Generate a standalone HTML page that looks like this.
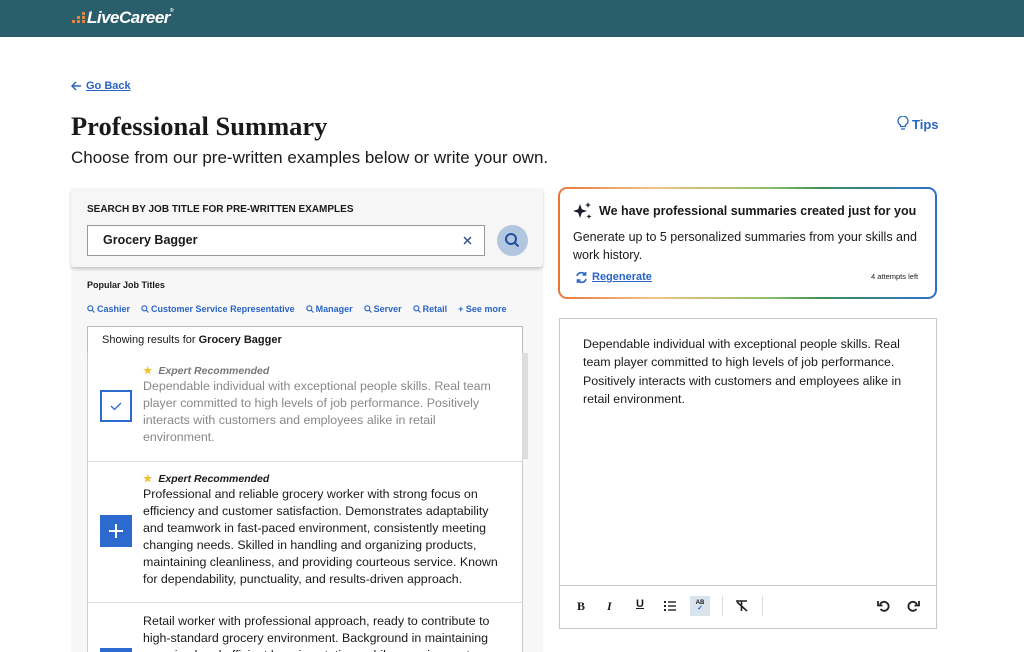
<!DOCTYPE html>
<html><head><meta charset="utf-8"><style>
*{box-sizing:border-box;margin:0;padding:0}
html,body{width:1024px;height:652px;overflow:hidden}
body{background:#fff;font-family:"Liberation Sans",Arial,sans-serif;color:#1a1a1a;position:relative}
.abs{position:absolute}
.hdr{left:0;top:0;width:1024px;height:37px;background:#2a5e6a}
.blue{color:#2a64c6}
.pill{display:inline-block;margin-right:11px}
.pill svg{vertical-align:-1px;margin-right:2px}
.item{position:absolute;left:0;width:434px;border-bottom:1px solid #ddd;background:#fff}
.txt{position:absolute;left:55px;font-size:12.4px;line-height:17px}
.er{font-size:10.5px;font-style:italic;font-weight:bold;line-height:14px}
.star{color:#f2c230;font-style:normal;margin-right:6px}
</style></head><body>
<div class="abs hdr"></div>
<div class="abs" style="left:72px;top:12px;width:14px;height:12px">
<div class="abs" style="left:10px;top:0;width:3px;height:3px;background:#e8833a"></div>
<div class="abs" style="left:5px;top:4px;width:3px;height:3px;background:#e8833a"></div>
<div class="abs" style="left:10px;top:4px;width:3px;height:3px;background:#e8833a"></div>
<div class="abs" style="left:0;top:8px;width:3px;height:3px;background:#e8833a"></div>
<div class="abs" style="left:5px;top:8px;width:3px;height:3px;background:#e8833a"></div>
<div class="abs" style="left:10px;top:8px;width:3px;height:3px;background:#e8833a"></div>
</div>
<div class="abs" style="left:87px;top:8px;color:#fff;font-weight:bold;font-style:italic;font-size:17px;letter-spacing:-0.5px">LiveCareer<span style="font-size:5px;vertical-align:top">®</span></div>

<svg class="abs" style="left:71px;top:81px" width="11" height="10" viewBox="0 0 11 10"><path d="M10 5H1.5M5 1L1 5l4 4" fill="none" stroke="#2a64c6" stroke-width="1.5"/></svg>
<div class="abs blue" style="left:86px;top:80px;font-size:11px;font-weight:bold;text-decoration:underline">Go Back</div>
<div class="abs" style="left:71px;top:111px;font-family:'Liberation Serif',serif;font-weight:bold;font-size:26.5px">Professional Summary</div>
<div class="abs" style="left:71px;top:148px;font-size:17px">Choose from our pre-written examples below or write your own.</div>
<div class="abs blue" style="left:897px;top:116px;font-size:13px;font-weight:bold">
<svg width="12" height="15" viewBox="0 0 12 15" style="vertical-align:-2px;margin-right:3px"><path d="M3.5 10.5V9C2 8 1 6.6 1 5a5 5 0 0110 0c0 1.6-1 3-2.5 4v1.5zM4 13h4" fill="none" stroke="#2a64c6" stroke-width="1.3"/></svg>Tips</div>

<div class="abs" style="left:71px;top:188px;width:472px;height:464px;background:#f7f7f7"></div>
<div class="abs" style="left:71px;top:188px;width:472px;height:79px;background:#f6f6f6;box-shadow:0 2px 3px rgba(0,0,0,.2);border-radius:3px"></div>
<div class="abs" style="left:87px;top:204px;font-size:10px;font-weight:bold">SEARCH BY JOB TITLE FOR PRE-WRITTEN EXAMPLES</div>
<div class="abs" style="left:87px;top:225px;width:398px;height:31px;background:#fff;border:1px solid #999"></div>
<div class="abs" style="left:103px;top:233px;font-size:12.5px;font-weight:bold">Grocery Bagger</div>
<svg class="abs" style="left:463px;top:236px" width="9" height="9"><path d="M1 1l7 7M8 1L1 8" stroke="#2a4f8c" stroke-width="1.4"/></svg>
<div class="abs" style="left:497px;top:225px;width:31px;height:31px;border-radius:50%;background:#b3c6e0"></div>
<svg class="abs" style="left:504px;top:232px" width="17" height="17" viewBox="0 0 17 17"><circle cx="7" cy="7" r="5" fill="none" stroke="#1f4f9e" stroke-width="2"/><path d="M10.5 10.5l4 4" stroke="#1f4f9e" stroke-width="2"/></svg>

<div class="abs" style="left:87px;top:280px;font-size:9px;font-weight:bold">Popular Job Titles</div>
<div class="abs blue" style="left:87px;top:304px;font-size:9px;font-weight:bold;white-space:nowrap">
<span class="pill"><svg width="8" height="8"><circle cx="3.3" cy="3.3" r="2.5" fill="none" stroke="#2a64c6" stroke-width="1.1"/><path d="M5 5l2.5 2.5" stroke="#2a64c6" stroke-width="1.1"/></svg>Cashier</span><span class="pill"><svg width="8" height="8"><circle cx="3.3" cy="3.3" r="2.5" fill="none" stroke="#2a64c6" stroke-width="1.1"/><path d="M5 5l2.5 2.5" stroke="#2a64c6" stroke-width="1.1"/></svg>Customer Service Representative</span><span class="pill"><svg width="8" height="8"><circle cx="3.3" cy="3.3" r="2.5" fill="none" stroke="#2a64c6" stroke-width="1.1"/><path d="M5 5l2.5 2.5" stroke="#2a64c6" stroke-width="1.1"/></svg>Manager</span><span class="pill"><svg width="8" height="8"><circle cx="3.3" cy="3.3" r="2.5" fill="none" stroke="#2a64c6" stroke-width="1.1"/><path d="M5 5l2.5 2.5" stroke="#2a64c6" stroke-width="1.1"/></svg>Server</span><span class="pill"><svg width="8" height="8"><circle cx="3.3" cy="3.3" r="2.5" fill="none" stroke="#2a64c6" stroke-width="1.1"/><path d="M5 5l2.5 2.5" stroke="#2a64c6" stroke-width="1.1"/></svg>Retail</span><span>+ See more</span></div>

<div class="abs" style="left:87px;top:326px;width:436px;height:28px;background:#fff;border:1px solid #bbb;font-size:11px;padding:7px 0 0 14px">Showing results for <b>Grocery Bagger</b></div>
<div class="abs" style="left:87px;top:353px;width:436px;height:299px;border-left:1px solid #ccc;border-right:1px solid #ccc;background:#fff;overflow:hidden">
<div class="item" style="top:1px;height:108px">
<div class="abs" style="left:12px;top:36px;width:32px;height:32px;border:2px solid #2d6ad0;background:#fff"></div>
<svg class="abs" style="left:21px;top:45px" width="14" height="14" viewBox="0 0 14 14"><path d="M2 7l3.5 3.5L12 4" fill="none" stroke="#2d6ad0" stroke-width="1.3"/></svg>
<div class="txt" style="top:10px;color:#888"><div class="er" style="color:#777"><span class="star">★</span>Expert Recommended</div>Dependable individual with exceptional people skills. Real team<br>player committed to high levels of job performance. Positively<br>interacts with customers and employees alike in retail<br>environment.</div>
</div>
<div class="item" style="top:109px;height:141px">
<div class="abs" style="left:12px;top:53px;width:32px;height:32px;background:#2d6ad0"></div>
<svg class="abs" style="left:20px;top:61px" width="16" height="16"><path d="M8 1v14M1 8h14" stroke="#fff" stroke-width="2"/></svg>
<div class="txt" style="top:10px"><div class="er"><span class="star">★</span>Expert Recommended</div>Professional and reliable grocery worker with strong focus on<br>efficiency and customer satisfaction. Demonstrates adaptability<br>and teamwork in fast-paced environment, consistently meeting<br>changing needs. Skilled in handling and organizing products,<br>maintaining cleanliness, and providing courteous service. Known<br>for dependability, punctuality, and results-driven approach.</div>
</div>
<div class="item" style="top:250px;height:60px;border-bottom:none">
<div class="abs" style="left:12px;top:45px;width:32px;height:32px;background:#2d6ad0"></div>
<div class="txt" style="top:10px">Retail worker with professional approach, ready to contribute to<br>high-standard grocery environment. Background in maintaining<br>organized and efficient bagging stations while ensuring customer</div>
</div>
</div>
<div class="abs" style="left:522px;top:353px;width:6px;height:106px;background:#ddd"></div>

<div class="abs" style="left:558px;top:187px;width:379px;height:112px;border-radius:9px;background:linear-gradient(90deg,#e8763a,#f2c48a 25%,#8fbf6a 55%,#3e8f5a 70%,#2f6fd0)"></div>
<div class="abs" style="left:560px;top:189px;width:375px;height:108px;border-radius:7px;background:#fff"></div>
<svg class="abs" style="left:572px;top:201px" width="22" height="20" viewBox="0 0 22 20"><path d="M8 3l1.8 5.2L15 10l-5.2 1.8L8 17l-1.8-5.2L1 10l5.2-1.8z" fill="#1a1a2e"/><path d="M16 1l.8 2.2L19 4l-2.2.8L16 7l-.8-2.2L13 4l2.2-.8zM17 13l.7 1.8 1.8.7-1.8.7L17 18l-.7-1.8-1.8-.7 1.8-.7z" fill="#1a1a2e"/></svg>
<div class="abs" style="left:599px;top:204px;font-size:12.5px;font-weight:bold">We have professional summaries created just for you</div>
<div class="abs" style="left:573px;top:228px;font-size:12.5px;line-height:18px">Generate up to 5 personalized summaries from your skills and<br>work history.</div>
<svg class="abs" style="left:575px;top:271px" width="13" height="13" viewBox="0 0 13 13"><path d="M2 5a4.5 4.5 0 018-1.5M11 8a4.5 4.5 0 01-8 1.5" fill="none" stroke="#2a64c6" stroke-width="1.6"/><path d="M10.5 1v3h-3M2.5 12V9h3" fill="none" stroke="#2a64c6" stroke-width="1.6"/></svg>
<div class="abs blue" style="left:592px;top:271px;font-size:11px;font-weight:bold;text-decoration:underline">Regenerate</div>
<div class="abs" style="left:871px;top:272px;font-size:7.5px">4 attempts left</div>

<div class="abs" style="left:559px;top:318px;width:378px;height:311px;border:1px solid #c8c8c8;background:#fff"></div>
<div class="abs" style="left:559px;top:585px;width:378px;height:1px;background:#c8c8c8"></div>
<div class="abs" style="left:583px;top:335px;font-size:12.4px;line-height:18.3px">Dependable individual with exceptional people skills. Real<br>team player committed to high levels of job performance.<br>Positively interacts with customers and employees alike in<br>retail environment.</div>
<div class="abs" style="left:577px;top:599px;font-size:12px;font-weight:bold;font-family:'Liberation Serif',serif">B</div>
<div class="abs" style="left:607px;top:599px;font-size:12px;font-style:italic;font-weight:bold;font-family:'Liberation Serif',serif">I</div>
<div class="abs" style="left:636px;top:598px;font-size:11px;font-weight:bold;text-decoration:underline">U</div>
<svg class="abs" style="left:664px;top:600px" width="13" height="11"><g fill="#222"><rect x="0" y="1" width="2" height="2"/><rect x="0" y="5" width="2" height="2"/><rect x="0" y="9" width="2" height="2"/><rect x="4" y="1.3" width="8" height="1.4"/><rect x="4" y="5.3" width="8" height="1.4"/><rect x="4" y="9.3" width="8" height="1.4"/></g></svg>
<div class="abs" style="left:690px;top:596px;width:20px;height:20px;background:#d9e4ec;font-size:6px;font-weight:bold;text-align:center;padding-top:4px">AB<div style="color:#2a64c6;font-size:7px;line-height:6px">✓</div></div>
<div class="abs" style="left:722px;top:596px;width:1px;height:20px;background:#ddd"></div>
<svg class="abs" style="left:735px;top:600px" width="14" height="12"><path d="M1 1h11M6.5 1v10M2 2l10 9" stroke="#222" stroke-width="1.6" fill="none"/></svg>
<div class="abs" style="left:762px;top:596px;width:1px;height:20px;background:#ddd"></div>
<svg class="abs" style="left:877px;top:600px" width="13" height="12" viewBox="0 0 13 12"><path d="M3 4.5A4.5 4.5 0 1 1 3.5 9" fill="none" stroke="#222" stroke-width="1.8"/><path d="M1 1v4.5h4.5" fill="none" stroke="#222" stroke-width="1.8"/></svg>
<svg class="abs" style="left:907px;top:600px" width="13" height="12" viewBox="0 0 13 12"><path d="M10 4.5A4.5 4.5 0 1 0 9.5 9" fill="none" stroke="#222" stroke-width="1.8"/><path d="M12 1v4.5H7.5" fill="none" stroke="#222" stroke-width="1.8"/></svg>
</body></html>
